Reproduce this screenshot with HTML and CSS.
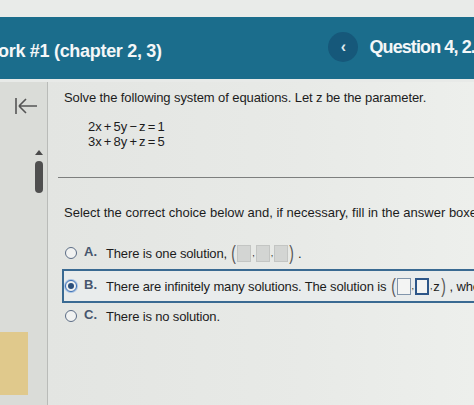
FILE: index.html
```html
<!DOCTYPE html>
<html>
<head>
<meta charset="utf-8">
<link rel="stylesheet" href="styles.css">
</head>
<body>
<div class="page">
  <div class="top-strip"></div>
  <header class="bar">
    <div class="title">ork #1 (chapter 2, 3)</div>
    <div class="nav">
      <span class="circle">&#8249;</span>
      <span class="q">Question 4, 2.1</span>
    </div>
  </header>
  <div class="body">
    <aside class="side">
      <svg class="collapse" width="24" height="18" viewBox="0 0 24 18">
        <path d="M2 1 V17 M5 9 H23 M5 9 L12 2 M5 9 L12 16" fill="none" stroke="#555" stroke-width="1.6"/>
      </svg>
      <div class="scroll">
        <span class="tri"></span>
        <span class="thumb"></span>
      </div>
      <div class="spacer"></div>
      <div class="note"></div>
    </aside>
    <main class="main">
      <p class="prompt">Solve the following system of equations. Let z be the parameter.</p>
      <div class="eqs">
        <div>2x + 5y &minus; z = 1</div>
        <div>3x + 8y + z = 5</div>
      </div>
      <div class="rule"></div>
      <p class="select">Select the correct choice below and, if necessary, fill in the answer boxes to complete your choice.</p>
      <div class="choices">
        <div class="choice row-a">
          <span class="radio"></span>
          <span class="letter">A.</span>
          <span class="text">There is one solution, <span class="paren">(</span><span class="box gray"></span><span class="comma">,</span><span class="box gray"></span><span class="comma">,</span><span class="box gray"></span><span class="paren">)</span><span class="dot">.</span></span>
        </div>
        <div class="choice row-b selected">
          <span class="radio on"></span>
          <span class="letter">B.</span>
          <span class="text">There are infinitely many solutions. The solution is <span class="paren">(</span><span class="box"></span><span class="comma">,</span><span class="box focus"></span><span class="comma">,</span>z<span class="paren">)</span><span class="dot">,</span> where z is any real number.</span>
        </div>
        <div class="choice row-c">
          <span class="radio"></span>
          <span class="letter">C.</span>
          <span class="text">There is no solution.</span>
        </div>
      </div>
    </main>
  </div>
</div>
</body>
</html>
```
FILE: styles.css
```css
html, body {
  margin: 0;
  padding: 0;
  width: 474px;
  height: 405px;
  overflow: hidden;
  background: #e6e8e5;
}
.page {
  width: 474px;
  height: 405px;
  display: flex;
  flex-direction: column;
  font-family: "Liberation Sans", Arial, sans-serif;
  color: #1c1c1c;
  overflow: hidden;
}
.top-strip {
  height: 17px;
  background: #e9ebe9;
  flex: none;
}
.bar {
  flex: none;
  height: 62px;
  background: #1b6d8c;
  display: flex;
  align-items: center;
  justify-content: space-between;
  color: #f4f7f8;
  font-weight: bold;
  font-size: 18px;
  white-space: nowrap;
  overflow: hidden;
}
.title {
  margin-left: -2px;
  padding-top: 6px;
  letter-spacing: -0.3px;
}
.nav {
  display: flex;
  align-items: center;
  gap: 11px;
  margin-right: -10px;
  padding-bottom: 2px;
  flex: none;
}
.circle {
  width: 30px;
  height: 30px;
  border-radius: 50%;
  background: #16587a;
  color: #dfe8ee;
  font-size: 16px;
  display: flex;
  align-items: center;
  justify-content: center;
  line-height: 1;
}
.q {
  letter-spacing: -0.9px;
}
.body {
  flex: 1;
  display: flex;
  border-top: 3px solid #e8eae8;
}
.side {
  flex: none;
  width: 47px;
  background: #dadcd8;
  border-right: 1.5px solid #b9bbb8;
  display: flex;
  flex-direction: column;
  align-items: flex-start;
}
.collapse {
  margin: 15px 0 0 14px;
}
.scroll {
  margin: 35px 0 0 35px;
  display: flex;
  flex-direction: column;
  align-items: center;
  gap: 6px;
}
.tri {
  width: 0;
  height: 0;
  border-left: 4px solid transparent;
  border-right: 4px solid transparent;
  border-bottom: 5px solid #4a4a4a;
}
.thumb {
  width: 8px;
  height: 32px;
  border-radius: 4px;
  background: #4f4f4f;
}
.spacer {
  flex: 1;
}
.note {
  width: 28px;
  height: 63px;
  background: #e0c98c;
  margin-bottom: 10px;
}
.main {
  flex: 1;
  min-width: 0;
  background: linear-gradient(90deg, #e3e5e2 0%, #e8eae7 60%, #edefec 100%);
  padding-left: 16px;
  overflow: hidden;
  white-space: nowrap;
  font-size: 13px;
  line-height: 15px;
}
.prompt {
  margin: 8px 0 0 0;
  letter-spacing: -0.1px;
}
.eqs {
  margin: 14px 0 0 24px;
  word-spacing: -1.5px;
}
.rule {
  margin: 28px 0 0 -6px;
  height: 1px;
  background: #7d7f7e;
}
.select {
  margin: 27px 0 0 0;
}
.choices {
  margin-top: 17px;
  display: flex;
  flex-direction: column;
}
.choice {
  box-sizing: border-box;
  display: flex;
  align-items: center;
  border: 2px solid transparent;
  margin-left: -2px;
  margin-right: -40px;
}
.row-a { height: 32px; }
.row-b { height: 34px; }
.row-c { height: 26px; }
.choice.selected {
  border-color: #3a6a92;
  background: #e9ecec;
}
.radio {
  box-sizing: border-box;
  width: 12px;
  height: 12px;
  border-radius: 50%;
  border: 1.5px solid #5b6c85;
  background: #f1f2f1;
  margin-left: 1px;
  flex: none;
  position: relative;
}
.radio.on {
  border-color: #3b6fb5;
  box-shadow: 0 0 0 1px #a8c3e3;
}
.radio.on::after {
  content: "";
  position: absolute;
  left: 1.5px;
  top: 1.5px;
  width: 6px;
  height: 6px;
  border-radius: 50%;
  background: #2b4f7c;
}
.letter {
  flex: none;
  font-weight: bold;
  color: #47566e;
  margin-left: 7px;
  width: 22px;
  font-size: 13px;
  position: relative;
  top: -2px;
}
.text {
  flex: none;
  display: flex;
  align-items: center;
  font-size: 13px;
  letter-spacing: -0.15px;
  white-space: pre;
}
.paren {
  font-size: 21px;
  color: #555;
  line-height: 1;
  display: inline-block;
  transform: scaleX(0.65);
  position: relative;
  top: -1px;
}
.box {
  box-sizing: border-box;
  width: 14px;
  height: 17px;
  border: 1px solid #8195ab;
  background: #f3f4f3;
}
.box.gray {
  background: #d3d5d3;
  border-color: #c3c5c3;
}
.box.focus {
  border: 2px solid #2d5688;
}
.comma {
  font-size: 9px;
  line-height: 9px;
  margin: 0 1px;
  align-self: flex-end;
  padding-bottom: 6px;
}
.dot {
  margin-left: 3px;
}
```
